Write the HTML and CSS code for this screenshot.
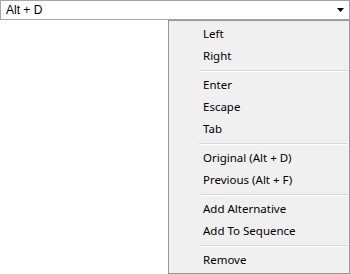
FILE: index.html
```html
<!DOCTYPE html>
<html lang="en">
<head>
  <meta charset="UTF-8" />
  <title>Hotkey</title>
  <link rel="stylesheet" href="styles.css">
</head>
<body>
  <div class="picker">
    <div class="combo">
      <span class="combo-value">Alt + D</span>
      <svg class="combo-arrow" width="7" height="4" viewBox="0 0 7 4"><polygon points="0,0 7,0 3.5,4" fill="#000"/></svg>
    </div>

    <ul class="menu">
      <li class="menu-item">Left</li>
      <li class="menu-item">Right</li>
      <li class="menu-sep"></li>
      <li class="menu-item">Enter</li>
      <li class="menu-item">Escape</li>
      <li class="menu-item">Tab</li>
      <li class="menu-sep"></li>
      <li class="menu-item">Original (Alt + D)</li>
      <li class="menu-item">Previous (Alt + F)</li>
      <li class="menu-sep"></li>
      <li class="menu-item">Add Alternative</li>
      <li class="menu-item">Add To Sequence</li>
      <li class="menu-sep"></li>
      <li class="menu-item">Remove</li>
    </ul>
  </div>
</body>
</html>
```

FILE: styles.css
```css
body {
  margin: 0;
  padding: 0;
  background: #fff;
  font-family: "Liberation Sans", Arial, sans-serif;
}
.picker {
  position: relative;
  width: 350px;
  height: 274px;
}
.combo {
  box-sizing: border-box;
  display: flex;
  align-items: center;
  justify-content: space-between;
  height: 20px;
  padding: 0 5px 0 5px;
  border: 1px solid #a5a5a5;
  background: #fff;
  font-size: 12px;
  color: #000;
}
.combo-value {
  line-height: 18px;
}
.combo-arrow {
  display: block;
  margin-top: 0;
}
.menu {
  position: absolute;
  left: 168px;
  top: 20px;
  box-sizing: border-box;
  width: 182px;
  height: 254px;
  margin: 0;
  padding: 2px;
  list-style: none;
  background: #f0f0f0;
  border: 1px solid #979797;
  font-family: "Noto Sans", "Open Sans", sans-serif;
  font-size: 11.5px;
  color: #000;
}
.menu-item {
  height: 22px;
  line-height: 22px;
  padding-left: 32px;
  white-space: nowrap;
}
.menu-sep {
  height: 0;
  margin: 3px 0 2px 28px;
  border-top: 1px solid #d7d7d7;
  border-bottom: 1px solid #fff;
}
```
